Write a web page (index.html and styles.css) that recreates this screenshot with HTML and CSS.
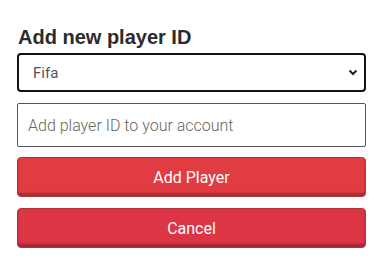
FILE: index.html
```html
<!DOCTYPE html>
<html lang="en">
<head>
  <meta charset="UTF-8" />
  <meta name="viewport" content="width=device-width, initial-scale=1" />
  <title>Add new player ID</title>
  <link rel="stylesheet" href="styles.css">
</head>
<body>
  <form class="player-form">
    <h3 class="form-title">Add new player ID</h3>
    <div class="select-box">
      <select class="game-select">
        <option>Fifa</option>
        <option>PUBG</option>
        <option>Fortnite</option>
      </select>
      <svg class="select-arrow" width="10" height="7" viewBox="0 0 10 7">
        <path d="M1.5 1.5 L5 5 L8.5 1.5" fill="none" stroke="#222" stroke-width="2"/>
      </svg>
    </div>
    <input class="player-input" type="text" placeholder="Add player ID to your account">
    <button type="button" class="btn btn-add">Add Player</button>
    <button type="button" class="btn btn-cancel">Cancel</button>
  </form>
</body>
</html>
```

FILE: styles.css
```css
* { box-sizing: border-box; margin: 0; padding: 0; }

body {
  font-family: Roboto, "Liberation Sans", sans-serif;
  background: #fff;
}

.player-form {
  display: flex;
  flex-direction: column;
  padding: 26px 18px 0 17px;
}

.form-title {
  font-family: "Liberation Sans", Arial, sans-serif;
  font-size: 20px; font-weight: 700;
  color: #2b2b2b;
  line-height: 22px;
  margin-bottom: 5px;
  padding-left: 1px;
}

.select-box {
  position: relative;
  margin-bottom: 11px;
}
.game-select {
  width: 100%; height: 39px;
  appearance: none;
  -webkit-appearance: none;
  border: 2px solid #111;
  border-radius: 4px;
  background: #fff;
  padding: 0 14px;
  font-family: Roboto, sans-serif;
  font-size: 15px;
  color: #555;
  outline: none;
}
.select-arrow {
  position: absolute;
  right: 8px; top: 16px;
  pointer-events: none;
}

.player-input {
  width: 100%; height: 44px;
  border: 1px solid #555;
  border-radius: 2px;
  padding: 0 10px;
  font-family: Roboto, sans-serif;
  font-size: 16px;
  font-weight: 300;
  color: #333;
  margin-bottom: 10px;
  outline: none;
}
.player-input::placeholder { color: #666; }

.btn {
  width: 100%; height: 40px;
  border: 1px solid #b8303a;
  border-radius: 4px;
  color: #fff;
  font-family: Roboto, sans-serif;
  font-size: 16px;
  cursor: pointer;
  box-shadow: inset 0 -3px 2px rgba(0,0,0,0.25);
}
.btn-add {
  background: #e03c41;
  margin-bottom: 11px;
}
.btn-cancel {
  background: #dc3545;
}
```
